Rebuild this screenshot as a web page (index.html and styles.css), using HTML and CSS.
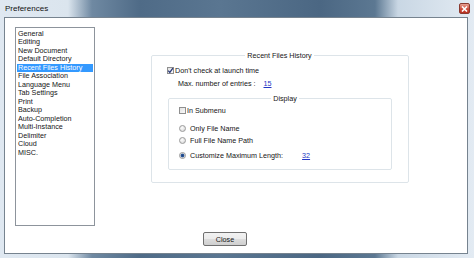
FILE: index.html
```html
<!DOCTYPE html>
<html lang="en">
<head>
  <meta charset="UTF-8" />
  <title>Preferences</title>
  <link rel="stylesheet" href="styles.css">
</head>
<body>

  <div class="window">

    <div class="titlebar">
      <span class="title">Preferences</span>
      <span class="close-btn" aria-label="Close">
        <svg width="7" height="6" viewBox="0 0 7 6"><path d="M1 0.5 L6 5.5 M6 0.5 L1 5.5" stroke="#fff" stroke-width="1.6" /></svg>
      </span>
    </div>

    <div class="client">

      <div class="content">

        <!-- Kategorien -->
        <ul class="listbox" role="listbox">
          <li>General</li>
          <li>Editing</li>
          <li>New Document</li>
          <li>Default Directory</li>
          <li class="selected">Recent Files History</li>
          <li>File Association</li>
          <li>Language Menu</li>
          <li>Tab Settings</li>
          <li>Print</li>
          <li>Backup</li>
          <li>Auto-Completion</li>
          <li>Multi-Instance</li>
          <li>Delimiter</li>
          <li>Cloud</li>
          <li>MISC.</li>
        </ul>

        <fieldset class="group outer">
          <legend>Recent Files History</legend>

          <div class="row">
            <span class="checkbox checked">
              <svg width="7" height="7" viewBox="0 0 7 7"><path d="M1.2 3.6 L2.8 5.4 L5.9 1.2" fill="none" stroke="#2b3a7a" stroke-width="1.3" /></svg>
            </span>
            Don't check at launch time
          </div>
          <div class="row entries">
            Max. number of entries :
            <a href="#" class="link">15</a>
          </div>

          <fieldset class="group inner">
            <legend>Display</legend>
            <div class="row first"><span class="checkbox"></span>In Submenu</div>
            <div class="row opt-1"><span class="radio"></span>Only File Name</div>
            <div class="row opt-2"><span class="radio"></span>Full File Name Path</div>
            <div class="row opt-3"><span class="radio on"></span>Customize Maximum Length:<a href="#" class="link wide">32</a></div>
          </fieldset>
        </fieldset>

      </div>

      <div class="footer">
        <button type="button">Close</button>
      </div>

    </div>
  </div>

</body>
</html>
```

FILE: styles.css
```css
* {
  box-sizing: border-box;
}
body {
  margin: 0;
  font-family: "Liberation Sans", Tahoma, sans-serif;
  font-size: 7.2px;
  color: #151515;
}

/* Fensterrahmen (Aero) */
.window {
  width: 474px;
  height: 258px;
  display: flex;
  flex-direction: column;
  padding: 0 6px 4px 4px;
  background: linear-gradient(to right, #dfe8f1 0, #dbe5ee 68px, #6f89a2 92px, #4f6b87 140px, #5a7691 220px, #4b6783 320px, #5c7892 375px, #c9d7e4 398px, #e3ebf3 474px);
}
.titlebar {
  height: 17px;
  display: flex;
  align-items: center;
  justify-content: space-between;
  padding-left: 1px;
}
.title {
  font-size: 8px;
  color: #111;
}
.close-btn {
  align-self: flex-start;
  margin-top: 3px;
  margin-right: -2px;
  width: 11px;
  height: 11px;
  border: 1px solid #8a3a30;
  border-radius: 2px;
  background: linear-gradient(#e7a294, #cc4b3a 55%, #b8301f);
  display: flex;
  align-items: center;
  justify-content: center;
}

/* Innenbereich */
.client {
  flex: 1;
  display: flex;
  flex-direction: column;
  background: #fff;
  border: 1px solid #76838f;
}
.content {
  display: flex;
  align-items: flex-start;
  padding: 9px 0 0 10px;
}

/* Liste links */
.listbox {
  width: 80px;
  height: 199px;
  margin: 0;
  padding: 1.5px 1px 0 1px;
  list-style: none;
  border: 1px solid #8d949c;
}
.listbox li {
  line-height: 8.5px;
  height: 8.5px;
  padding-left: 1px;
  white-space: nowrap;
}
.listbox li.selected {
  background-color: #3399ff;
  color: #fff;
}

/* Gruppenrahmen */
.group {
  margin: 0;
  border: 1px solid #dde4e9;
  border-radius: 2px;
  min-width: 0;
}
.group legend {
  margin: 0 auto;
  padding: 0 2px;
  line-height: 9px;
}
.outer {
  width: 258px;
  margin-left: 56px;
  margin-top: 23.5px;
  padding: 5.5px 16px 12px 15px;
}
.inner {
  margin: 5px 0 0 1px;
  padding: 2.5px 0 8px 10px;
}

.row {
  display: flex;
  align-items: center;
  height: 10px;
  white-space: nowrap;
}
.entries {
  margin-top: 3.5px;
  padding-left: 11px;
}
.opt-1 {
  margin-top: 8px;
}
.opt-2 {
  margin-top: 2.5px;
}
.opt-3 {
  margin-top: 5px;
}

.link {
  color: #2236c4;
  text-decoration: underline;
  margin-left: 8px;
}
.link.wide {
  margin-left: 19px;
}

/* Kontrollkästchen und Optionsfelder */
.checkbox {
  width: 7px;
  height: 7px;
  margin-right: 1px;
  border: 1px solid #8f8f8f;
  background: linear-gradient(135deg, #e2e2e2, #fafafa);
  display: flex;
  align-items: center;
  justify-content: center;
}
.checkbox svg {
  flex-shrink: 0;
}
.radio {
  width: 7px;
  height: 7px;
  margin-right: 4px;
  border-radius: 50%;
  border: 1px solid #9a9a9a;
  background: radial-gradient(circle at 40% 35%, #fdfdfd, #d2d2d2);
}
.radio.on {
  background: radial-gradient(circle at 50% 50%, #1c3f78 0, #2d5aa0 1.6px, #dcdcdc 2.2px, #f2f2f2);
}

/* Schaltfläche unten */
.footer {
  margin-top: auto;
  padding: 0 0 7px 198px;
}
button {
  width: 44px;
  height: 14px;
  padding: 0;
  font-family: inherit;
  font-size: 7.2px;
  color: #151515;
  border: 1px solid #707070;
  border-radius: 2px;
  background: linear-gradient(#f2f2f2 0, #ebebeb 50%, #dddddd 50%, #cfcfcf 100%);
}
```
